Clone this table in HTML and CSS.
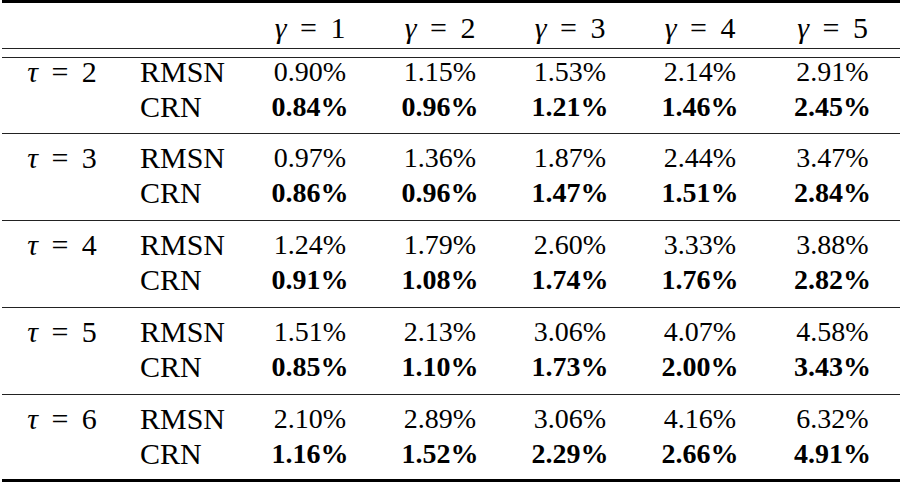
FILE: index.html
```html
<!DOCTYPE html>
<html lang="en">
<head>
    <meta charset="UTF-8">
    <meta name="viewport" content="width=device-width, initial-scale=1.0">
    <title>RMSN vs CRN</title>
    <link rel="stylesheet" href="styles.css">
</head>
<body>
    <div class="results">
        <div class="row head">
            <div></div>
            <div></div>
            <div class="gamma"><i>γ</i><span class="eq">=</span>1</div>
            <div class="gamma"><i>γ</i><span class="eq">=</span>2</div>
            <div class="gamma"><i>γ</i><span class="eq">=</span>3</div>
            <div class="gamma"><i>γ</i><span class="eq">=</span>4</div>
            <div class="gamma"><i>γ</i><span class="eq">=</span>5</div>
        </div>

        <div class="group first">
            <div class="row">
                <div class="tau"><i>τ</i><span class="eq">=</span>2</div>
                <div class="model">RMSN</div>
                <div class="num">0.90%</div>
                <div class="num">1.15%</div>
                <div class="num">1.53%</div>
                <div class="num">2.14%</div>
                <div class="num">2.91%</div>
            </div>
            <div class="row best">
                <div></div>
                <div class="model">CRN</div>
                <div class="num">0.84%</div>
                <div class="num">0.96%</div>
                <div class="num">1.21%</div>
                <div class="num">1.46%</div>
                <div class="num">2.45%</div>
            </div>
        </div>

        <div class="group">
            <div class="row">
                <div class="tau"><i>τ</i><span class="eq">=</span>3</div>
                <div class="model">RMSN</div>
                <div class="num">0.97%</div>
                <div class="num">1.36%</div>
                <div class="num">1.87%</div>
                <div class="num">2.44%</div>
                <div class="num">3.47%</div>
            </div>
            <div class="row best">
                <div></div>
                <div class="model">CRN</div>
                <div class="num">0.86%</div>
                <div class="num">0.96%</div>
                <div class="num">1.47%</div>
                <div class="num">1.51%</div>
                <div class="num">2.84%</div>
            </div>
        </div>

        <div class="group">
            <div class="row">
                <div class="tau"><i>τ</i><span class="eq">=</span>4</div>
                <div class="model">RMSN</div>
                <div class="num">1.24%</div>
                <div class="num">1.79%</div>
                <div class="num">2.60%</div>
                <div class="num">3.33%</div>
                <div class="num">3.88%</div>
            </div>
            <div class="row best">
                <div></div>
                <div class="model">CRN</div>
                <div class="num">0.91%</div>
                <div class="num">1.08%</div>
                <div class="num">1.74%</div>
                <div class="num">1.76%</div>
                <div class="num">2.82%</div>
            </div>
        </div>

        <div class="group">
            <div class="row">
                <div class="tau"><i>τ</i><span class="eq">=</span>5</div>
                <div class="model">RMSN</div>
                <div class="num">1.51%</div>
                <div class="num">2.13%</div>
                <div class="num">3.06%</div>
                <div class="num">4.07%</div>
                <div class="num">4.58%</div>
            </div>
            <div class="row best">
                <div></div>
                <div class="model">CRN</div>
                <div class="num">0.85%</div>
                <div class="num">1.10%</div>
                <div class="num">1.73%</div>
                <div class="num">2.00%</div>
                <div class="num">3.43%</div>
            </div>
        </div>

        <div class="group last">
            <div class="row">
                <div class="tau"><i>τ</i><span class="eq">=</span>6</div>
                <div class="model">RMSN</div>
                <div class="num">2.10%</div>
                <div class="num">2.89%</div>
                <div class="num">3.06%</div>
                <div class="num">4.16%</div>
                <div class="num">6.32%</div>
            </div>
            <div class="row best">
                <div></div>
                <div class="model">CRN</div>
                <div class="num">1.16%</div>
                <div class="num">1.52%</div>
                <div class="num">2.29%</div>
                <div class="num">2.66%</div>
                <div class="num">4.91%</div>
            </div>
        </div>
    </div>
</body>
</html>
```

FILE: styles.css
```css
body {
    font-family: "Liberation Serif", "Times New Roman", serif;
    font-size: 30px;
    color: #000;
    background-color: #fff;
    margin: 0;
    padding: 0;
}

.results {
    width: 898px;
    margin-left: 2px;
    border-top: 3px solid #000;
    border-bottom: 3px solid #000;
}

.row {
    display: grid;
    grid-template-columns: 120px 123px repeat(4, 130px) 1fr;
    height: 28px;
    line-height: 28px;
    white-space: nowrap;
}

.head {
    padding: 11px 0 6px;
    border-bottom: 1px solid #222;
}

.group {
    display: flex;
    flex-direction: column;
    gap: 7px;
    border-top: 1px solid #222;
    padding: 10px 0 13px;
}

.group.first {
    margin-top: 8px;
    padding: 0 0 12px;
}

.group.last {
    padding-bottom: 11px;
}

.tau,
.gamma,
.num {
    text-align: center;
}

.num {
    font-size: 28px;
}

.model {
    padding-left: 18px;
}

.best .num {
    font-weight: bold;
}

.eq {
    margin: 0 0.45em;
}

i {
    font-style: italic;
}
```
